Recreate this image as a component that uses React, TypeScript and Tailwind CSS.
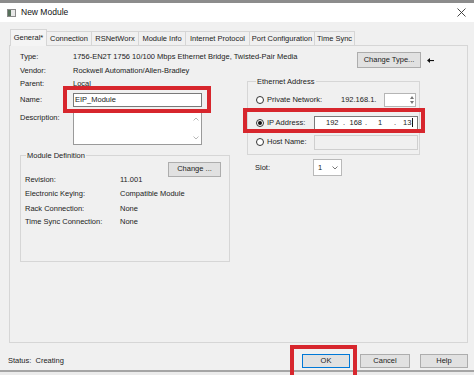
import React from 'react';

const tabs = [
  { label: 'General*', cls: 'w-[37px]', active: true },
  { label: 'Connection', cls: 'w-[45px]' },
  { label: 'RSNetWorx', cls: 'w-[47px]' },
  { label: 'Module Info', cls: 'w-[47px]' },
  { label: 'Internet Protocol', cls: 'w-[64px]' },
  { label: 'Port Configuration', cls: 'w-[65px]' },
  { label: 'Time Sync', cls: 'w-[40px]' },
];

function Radio({ checked }: { checked?: boolean }) {
  return (
    <span className="flex h-[8px] w-[8px] shrink-0 items-center justify-center rounded-full border border-[#333] bg-white">
      {checked && <span className="h-[4px] w-[4px] rounded-full bg-[#111]" />}
    </span>
  );
}

function Button({ children, className }: { children: React.ReactNode; className: string }) {
  return (
    <div className={`flex shrink-0 items-center justify-center border border-[#adadad] bg-[#e1e1e1] ${className}`}>
      {children}
    </div>
  );
}

function TitleBar() {
  return (
    <div className="flex h-[19px] shrink-0 items-center bg-white pl-[7px]">
      <svg width="9" height="8" viewBox="0 0 9 8">
        <rect x="0.5" y="0.5" width="8" height="7" fill="#e8e8e8" stroke="#8a8a8a" />
        <rect x="1" y="1" width="3" height="6" fill="#56705a" />
      </svg>
      <span className="ml-[5px] text-[8.5px] text-[#111]">New Module</span>
      <svg className="ml-auto mr-[8px]" width="9" height="9" viewBox="0 0 9 9">
        <path d="M0.5 0.5 L8.5 8.5 M8.5 0.5 L0.5 8.5" stroke="#333" strokeWidth="0.9" />
      </svg>
    </div>
  );
}

function Tabs() {
  return (
    <div className="mt-[7px] flex h-[16px] shrink-0 items-end pl-[10px]">
      {tabs.map((t) =>
        t.active ? (
          <div
            key={t.label}
            className={`relative z-10 -mb-px flex h-[17px] items-center justify-center border border-b-0 border-[#d6d6d6] bg-[#f4f4f4] ${t.cls}`}
          >
            {t.label}
          </div>
        ) : (
          <div
            key={t.label}
            className={`flex h-[14px] items-center justify-center border-t border-r border-[#d6d6d6] bg-[#f0f0f0] ${t.cls}`}
          >
            {t.label}
          </div>
        )
      )}
    </div>
  );
}

function LeftColumn() {
  return (
    <div className="relative w-[221px] shrink-0 pl-[10px]">
      <div className="flex h-[14px] items-center">
        <span className="w-[53px] shrink-0">Parent:</span>
        <span>Local</span>
      </div>
      <div className="mt-[2px] flex h-[14px] items-center">
        <span className="w-[53px] shrink-0">Name:</span>
        <div className="flex h-[14px] w-[129px] items-center border border-[#7a7a7a] bg-white pl-[1px]">
          EIP_Module
        </div>
      </div>
      <div className="mt-[5px] flex">
        <span className="w-[53px] shrink-0 pt-[2px]">Description:</span>
        <div className="flex h-[33px] w-[129px] justify-end border border-[#9a9a9a] bg-white">
          <div className="flex w-[11px] flex-col items-center justify-between py-[4px]">
            <svg width="6" height="4" viewBox="0 0 6 4">
              <path d="M0.5 3.5 L3 1 L5.5 3.5" fill="none" stroke="#a6a6a6" strokeWidth="0.8" />
            </svg>
            <svg width="6" height="4" viewBox="0 0 6 4">
              <path d="M0.5 0.5 L3 3 L5.5 0.5" fill="none" stroke="#a6a6a6" strokeWidth="0.8" />
            </svg>
          </div>
        </div>
      </div>

      <fieldset className="mt-[7px] h-[110px] w-[210px] border border-[#d6d6d6] px-[4px]">
        <legend className="ml-[1px] px-[1px]">Module Definition</legend>
        <div className="flex justify-end pr-[4px]">
          <Button className="mt-[2px] h-[15px] w-[53px]">Change ...</Button>
        </div>
        <div className="-mt-[4px] flex h-[14px] items-center">
          <span className="w-[95px] shrink-0">Revision:</span>
          <span>11.001</span>
        </div>
        <div className="flex h-[14px] items-center">
          <span className="w-[95px] shrink-0">Electronic Keying:</span>
          <span>Compatible Module</span>
        </div>
        <div className="mt-[1px] flex h-[14px] items-center">
          <span className="w-[95px] shrink-0">Rack Connection:</span>
          <span>None</span>
        </div>
        <div className="-mt-[1px] flex h-[14px] items-center">
          <span className="w-[95px] shrink-0">Time Sync Connection:</span>
          <span>None</span>
        </div>
      </fieldset>

      {/* red highlight around Name */}
      <div className="absolute left-[53px] top-[9px] h-[27px] w-[148px] border-[4px] border-[#d7262d]" />
    </div>
  );
}

function RightColumn() {
  return (
    <div className="relative ml-[16px] w-[180px] shrink-0">
      <fieldset className="mt-[1px] h-[77px] w-[173px] border border-[#d6d6d6] pl-[8px]">
        <legend className="px-[1px]">Ethernet Address</legend>
        <div className="mt-[7px] flex h-[14px] items-center">
          <Radio />
          <span className="ml-[3px] w-[47px] shrink-0">Private Network:</span>
          <span className="w-[70px] shrink-0 pl-[27px]">192.168.1.</span>
          <div className="flex h-[14px] w-[32px] shrink-0 justify-end border border-[#b5b5b5] bg-white">
            <div className="flex w-[7px] flex-col items-center justify-center gap-[2px]">
              <svg width="4" height="3" viewBox="0 0 4 3">
                <path d="M0 3 L2 0 L4 3Z" fill="#777" />
              </svg>
              <svg width="4" height="3" viewBox="0 0 4 3">
                <path d="M0 0 L2 3 L4 0Z" fill="#777" />
              </svg>
            </div>
          </div>
        </div>
        <div className="mt-[9px] flex h-[14px] items-center">
          <Radio checked />
          <span className="ml-[3px] w-[47px] shrink-0">IP Address:</span>
          <div className="flex h-[14px] w-[104px] shrink-0 items-center border border-[#7a7a7a] bg-white pl-[11px]">
            <span>192</span>
            <span className="w-[11px] text-center">.</span>
            <span>168</span>
            <span className="w-[8px] text-center">.</span>
            <span className="w-[20px] text-center">1</span>
            <span className="w-[10px] text-center">.</span>
            <span className="ml-[3px]">13</span>
            <span className="ml-[1px] h-[9px] w-px bg-[#111]" />
          </div>
        </div>
        <div className="mt-[5px] flex h-[15px] items-center">
          <Radio />
          <span className="ml-[3px] w-[47px] shrink-0">Host Name:</span>
          <div className="h-[15px] w-[104px] shrink-0 border border-[#cfcfcf] bg-[#f0f0f0]" />
        </div>
      </fieldset>

      <div className="mt-[4px] flex h-[17px] items-center pl-[8px]">
        <span className="w-[58px] shrink-0">Slot:</span>
        <div className="flex h-[17px] w-[29px] items-center justify-between border border-[#b9b9b9] bg-white pl-[4px] pr-[3px]">
          <span>1</span>
          <svg width="6" height="4" viewBox="0 0 6 4">
            <path d="M0.5 0.5 L3 3 L5.5 0.5" fill="none" stroke="#555" strokeWidth="0.8" />
          </svg>
        </div>
      </div>

      {/* red highlight around IP Address */}
      <div className="absolute -left-[4px] top-[31px] h-[25px] w-[182px] border-[4px] border-[#d7262d]" />
    </div>
  );
}

function Panel() {
  return (
    <div className="ml-[9px] h-[298px] w-[459px] shrink-0 border border-[#d6d6d6] bg-[#f0f0f0]">
      <div className="mt-[4px] flex h-[14px] items-start pl-[10px] pr-[33px]">
        <span className="w-[53px] shrink-0 leading-[14px]">Type:</span>
        <span className="flex-1 leading-[14px]">
          1756-EN2T 1756 10/100 Mbps Ethernet Bridge, Twisted-Pair Media
        </span>
        <Button className="mt-[2px] h-[16px] w-[64px]">Change Type...</Button>
        <svg className="ml-[6px] mt-[8px]" width="7" height="5" viewBox="0 0 7 5">
          <path d="M0 2.5 L3 0 L3 5 Z" fill="#111" />
          <rect x="2.5" y="2" width="4.5" height="1.1" fill="#111" />
        </svg>
      </div>
      <div className="flex h-[13px] items-center pl-[10px]">
        <span className="w-[53px] shrink-0">Vendor:</span>
        <span>Rockwell Automation/Allen-Bradley</span>
      </div>
      <div className="flex">
        <LeftColumn />
        <RightColumn />
      </div>
    </div>
  );
}

function Footer() {
  return (
    <div className="relative flex h-[27px] shrink-0 items-start pl-[8px] pr-[6px]">
      <span className="mt-[14px]">Status:&nbsp; Creating</span>
      <div className="ml-auto mt-[11px] flex gap-[10px]">
        <div className="flex h-[14px] w-[48px] items-center justify-center border border-[#0078d7] bg-[#e1e1e1]">
          OK
        </div>
        <Button className="h-[14px] w-[50px]">Cancel</Button>
        <Button className="h-[14px] w-[48px]">Help</Button>
      </div>
      {/* red highlight around OK */}
      <div className="absolute left-[290px] top-[2px] z-10 h-[40px] w-[67px] border-[4px] border-[#d7262d]" />
    </div>
  );
}

export default function App() {
  return (
    <div className="relative flex h-[375px] w-[474px] flex-col overflow-hidden whitespace-nowrap bg-[#f0f0f0] font-['Liberation_Sans',Arial,sans-serif] text-[7.5px] leading-none text-[#222]">
      <div className="h-[3px] shrink-0 bg-[#8c8c8c]" />
      <TitleBar />
      <Tabs />
      <Panel />
      <Footer />
      <div className="h-[2px] shrink-0 bg-[#a5a5a5]" />
      <div className="flex-1 bg-[#ececec]" />
    </div>
  );
}
